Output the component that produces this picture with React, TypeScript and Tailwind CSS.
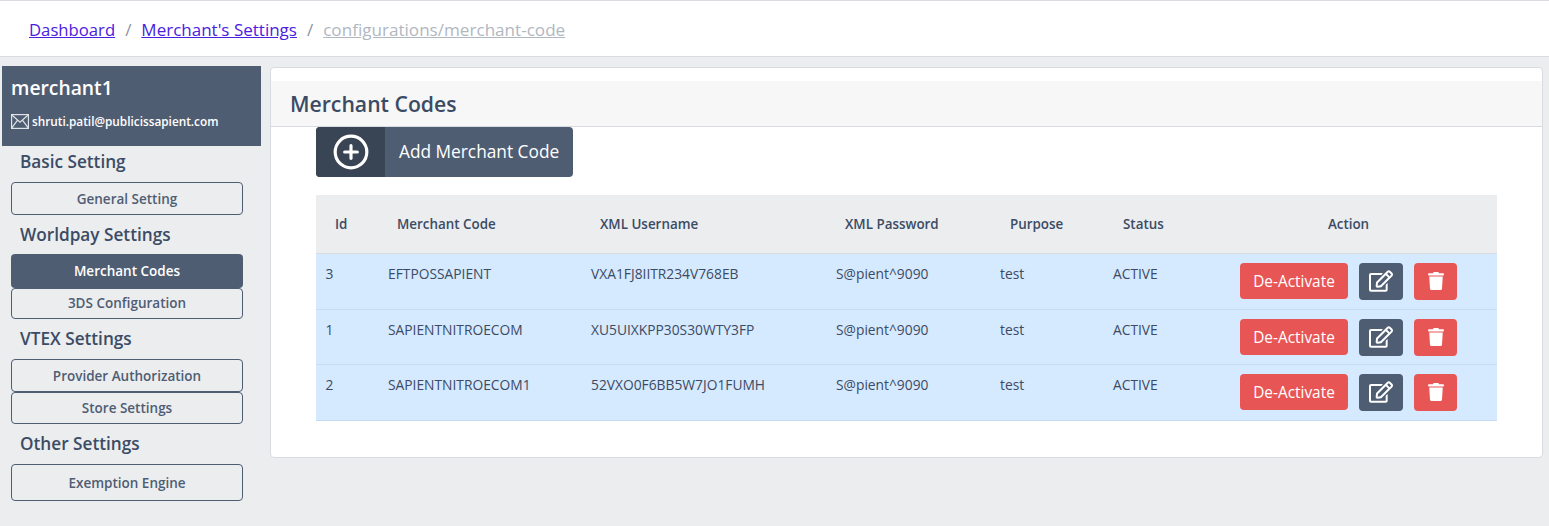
import { FaRegEdit, FaTrash } from "react-icons/fa";
import { FiPlusCircle } from "react-icons/fi";

const rows = [
  { id: "3", code: "EFTPOSSAPIENT", user: "VXA1FJ8IITR234V768EB", h: "h-[56px]", a: "pl-[40px] align-middle" },
  { id: "1", code: "SAPIENTNITROECOM", user: "XU5UIXKPP30S30WTY3FP", h: "h-[55px]", a: "pl-[40px] pt-[1px] align-middle" },
  { id: "2", code: "SAPIENTNITROECOM1", user: "52VXO0F6BB5W7JO1FUMH", h: "h-[56px]", a: "pl-[40px] align-middle" },
];

function NavButton({ label, className = "" }: { label: string; className?: string }) {
  return (
    <button className={"block w-[232px] rounded-[4px] border border-[#4f5d73] text-center text-[13.5px] font-semibold text-[#4f5d73] " + className}>
      {label}
    </button>
  );
}

function Heading({ label, className = "" }: { label: string; className?: string }) {
  return <h5 className={"pl-[9px] text-[17.2px] leading-[22px] font-semibold text-[#3c4b64] " + className}>{label}</h5>;
}

export default function App() {
  return (
    <div className="min-h-[526px] bg-[#ebedef] font-['Open_Sans','Noto_Sans',sans-serif] text-[#3c4b64]">
      <nav className="flex h-[57px] items-center gap-[10px] border-y border-[#d8dbe0] bg-white pt-[2px] pl-[29px] text-[17px]">
        <a href="#" className="text-[16.7px] text-[#4a20e0] underline">Dashboard</a>
        <span className="text-[#8a93a2]">/</span>
        <a href="#" className="text-[#4a20e0] underline">Merchant's Settings</a>
        <span className="text-[#8a93a2]">/</span>
        <a href="#" className="text-[17.1px] text-[#b1b7c1] underline">configurations/merchant-code</a>
      </nav>
      <div className="flex items-start pt-[9px] pl-[2px]">
        <aside className="w-[259px] shrink-0">
          <div className="h-[80px] bg-[#4f5d73] pt-[8px] pl-[9px] text-white">
            <div className="text-[19.3px] leading-[28px] font-semibold">merchant1</div>
            <div className="mt-[9px] flex items-center gap-[3px] text-[11.8px] leading-[20px] font-semibold">
              <svg viewBox="0 0 18 15" className="h-[15px] w-[18px] text-[#dfe2e7]" fill="none" stroke="currentColor" strokeWidth="1.2">
                <rect x="0.6" y="0.6" width="16.8" height="13.8" />
                <path d="M0.6 0.8 9 8.2 17.4 0.8M0.6 14.2 6.6 6.2M17.4 14.2 11.4 6.2" />
              </svg>
              <span>shruti.patil@publicissapient.com</span>
            </div>
          </div>
          <div className="pl-[9px]">
            <Heading label="Basic Setting" className="pt-[5px]" />
            <NavButton label="General Setting" className="mt-[9px] h-[33px] pt-[1px]" />
            <Heading label="Worldpay Settings" className="mt-[7px] pt-[2px]" />
            <button className="mt-[8px] block h-[34px] w-[232px] rounded-[4px] bg-[#4f5d73] pt-[1px] text-center text-[13.5px] font-semibold text-white">Merchant Codes</button>
            <NavButton label="3DS Configuration" className="h-[31px]" />
            <Heading label="VTEX Settings" className="mt-[7px] pt-[2px]" />
            <NavButton label="Provider Authorization" className="mt-[9px] h-[33px] pt-[1px]" />
            <NavButton label="Store Settings" className="h-[32px] pt-[1px]" />
            <Heading label="Other Settings" className="mt-[7px] pt-[2px]" />
            <NavButton label="Exemption Engine" className="mt-[9px] h-[37px] pt-[1px]" />
          </div>
        </aside>
        <main className="mt-[1px] ml-[9px] h-[391px] w-[1273px] rounded-[4px] border border-[#d8dbe0] bg-white pt-[13px]">
          <div className="flex h-[46px] items-center border-b border-[#d8dbe0] bg-[#f7f7f7] pt-[1px] pl-[19px] text-[21.2px] font-semibold text-[#3c4b64]">
            Merchant Codes
          </div>
          <div className="pl-[45px]">
            <button className="flex h-[50px] w-[257px] overflow-hidden rounded-[4px] bg-[#4f5d73] text-white">
              <span className="flex h-full w-[69px] items-center justify-center bg-[#394455]">
                <FiPlusCircle className="h-[38px] w-[38px]" />
              </span>
              <span className="flex h-full flex-1 items-center pl-[14px] text-[17.3px]">Add Merchant Code</span>
            </button>
            <table className="mt-[18px] w-[1181px] table-fixed border-collapse text-[13.8px]">
              <colgroup>
                <col className="w-[62px]" />
                <col className="w-[203px]" />
                <col className="w-[245px]" />
                <col className="w-[165px]" />
                <col className="w-[113px]" />
                <col className="w-[96px]" />
                <col className="w-[297px]" />
              </colgroup>
              <thead>
                <tr className="h-[58px] border-b border-[#d8dbe0] bg-[#ebedef] text-left text-[13.4px] text-[#3c4b64]">
                  {["Id", "Merchant Code", "XML Username", "XML Password", "Purpose", "Status"].map((t) => (
                    <th key={t} className="pl-[19px] font-semibold">{t}</th>
                  ))}
                  <th className="text-center font-semibold">Action</th>
                </tr>
              </thead>
              <tbody>
                {rows.map((r) => (
                  <tr key={r.id} className={"border-b border-[#c5dcf5] bg-[#d5e9ff] " + r.h}>
                    <td className="pt-[8px] pl-[9.5px] align-top leading-[24px]">{r.id}</td>
                    <td className="pt-[8px] pl-[10px] align-top leading-[24px]">{r.code}</td>
                    <td className="pt-[8px] pl-[10px] align-top leading-[24px]">{r.user}</td>
                    <td className="pt-[8px] pl-[10px] align-top leading-[24px]">S@pient^9090</td>
                    <td className="pt-[8px] pl-[9px] align-top leading-[24px]">test</td>
                    <td className="pt-[8px] pl-[9px] align-top leading-[24px]">ACTIVE</td>
                    <td className={r.a}>
                      <div className="flex items-center">
                        <button className="h-[36px] w-[108px] rounded-[4px] bg-[#e85555] pt-[1px] text-[15.4px] text-white">De-Activate</button>
                        <button className="ml-[11px] flex h-[37px] w-[44px] items-center justify-center rounded-[4px] bg-[#4f5d73] text-white">
                          <FaRegEdit className="h-[24px] w-[24px]" />
                        </button>
                        <button className="ml-[11px] flex h-[37px] w-[43px] items-center justify-center rounded-[4px] bg-[#e85555] text-white">
                          <FaTrash className="h-[18px] w-[16px]" />
                        </button>
                      </div>
                    </td>
                  </tr>
                ))}
              </tbody>
            </table>
          </div>
        </main>
      </div>
    </div>
  );
}
